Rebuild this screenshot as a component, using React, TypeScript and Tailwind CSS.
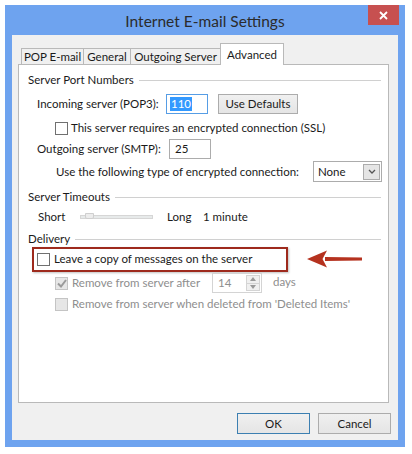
import React from "react"

const font = { fontFamily: "Lato, 'Noto Sans', sans-serif" }

function Check({ checked = false, disabled = false }: { checked?: boolean; disabled?: boolean }) {
  return (
    <div
      className={
        disabled
          ? "flex h-[13px] w-[13px] shrink-0 items-center justify-center border border-[#c4c4c4] bg-[#e6e6e6]"
          : "flex h-[13px] w-[13px] shrink-0 items-center justify-center border border-[#707070] bg-white"
      }
    >
      {checked && (
        <svg width="10" height="9" viewBox="0 0 10 9">
          <path d="M1 4.5 L4 7.5 L9 1" fill="none" stroke="#9a9a9a" strokeWidth="2" />
        </svg>
      )}
    </div>
  )
}

function GroupHeader({ title }: { title: string }) {
  return (
    <div className="flex h-4 items-center gap-[5px] pl-[9px] pr-[7px]">
      <span className="whitespace-nowrap">{title}</span>
      <div className="h-px flex-1 bg-[#d0d0d0]" />
    </div>
  )
}

export default function App() {
  return (
    <div className="h-[454px] w-[412px] bg-white p-[5px] text-[11.5px] leading-4 text-[#1a1a1a]" style={font}>
      {/* Window */}
      <div className="flex h-[442px] w-[400px] flex-col bg-[#6ea3ef]">
        {/* Title bar */}
        <div className="relative flex h-[30px] shrink-0 items-center justify-center">
          <span className="pt-[2px] text-[15.5px] text-[#2b2b2b]">Internet E-mail Settings</span>
          <div className="absolute right-[6px] top-0 flex h-[20px] w-[31px] items-center justify-center bg-[#c75050]">
            <svg width="9" height="9" viewBox="0 0 9 9">
              <path d="M1 1 L8 8 M8 1 L1 8" stroke="white" strokeWidth="1.8" />
            </svg>
          </div>
        </div>

        {/* Client area */}
        <div className="mx-[7px] mb-[7px] flex flex-1 flex-col bg-[#f0f0f0] pl-[6px] pr-[9px] pt-[8px]">
          {/* Tabs */}
          <div className="flex h-[21px] items-end pl-[3px]">
            <div className="flex h-[16px] w-[62px] items-center justify-center border-l border-t border-[#b9b9b9]">POP E-mail</div>
            <div className="flex h-[16px] w-[47px] items-center justify-center border-l border-t border-[#b9b9b9]">General</div>
            <div className="flex h-[16px] w-[90px] items-center justify-center border-l border-t border-[#b9b9b9]">Outgoing Server</div>
            <div className="relative z-10 -mb-px flex h-[22px] w-[64px] items-start justify-center border-x border-t border-[#b9b9b9] bg-white pt-[3px]">
              Advanced
            </div>
          </div>

          {/* Panel */}
          <div className="flex h-[339px] flex-col border border-[#b9b9b9] bg-white pt-[7px]">
            <GroupHeader title="Server Port Numbers" />

            <div className="mt-[6px] flex h-[20px] items-center pl-[18px]">
              <span className="w-[129px] whitespace-nowrap">Incoming server (POP3):</span>
              <div className="flex h-[20px] w-[42px] items-center border border-[#569de5] bg-white px-[3px]">
                <span className="bg-[#3399ff] px-px leading-[14px] text-white">110</span>
              </div>
              <div className="ml-[10px] flex h-[20px] w-[80px] items-center justify-center border border-[#acacac] bg-gradient-to-b from-[#f0f0f0] to-[#e5e5e5]">
                Use Defaults
              </div>
            </div>

            <div className="mt-[6px] flex h-4 items-center gap-[3px] pl-[36px]">
              <Check />
              <span className="whitespace-nowrap">This server requires an encrypted connection (SSL)</span>
            </div>

            <div className="mt-[3px] flex h-[20px] items-center pl-[18px]">
              <span className="w-[132px] whitespace-nowrap">Outgoing server (SMTP):</span>
              <div className="flex h-[20px] w-[42px] items-center border border-[#acacac] bg-white px-[5px]">25</div>
            </div>

            <div className="mt-[2px] flex h-[21px] items-center pl-[37px]">
              <span className="w-[257px] whitespace-nowrap">Use the following type of encrypted connection:</span>
              <div className="flex h-[21px] w-[69px] items-center justify-between border border-[#acacac] bg-white pl-[4px] pr-[1px]">
                <span>None</span>
                <div className="flex h-[16px] w-[17px] items-center justify-center border border-[#acacac] bg-[#e5e5e5]">
                  <svg width="8" height="5" viewBox="0 0 8 5">
                    <path d="M1 1 L4 4 L7 1" fill="none" stroke="#555" strokeWidth="1.3" />
                  </svg>
                </div>
              </div>
            </div>

            <div className="mt-[7px]">
              <GroupHeader title="Server Timeouts" />
            </div>

            <div className="mt-[4px] flex h-4 items-center pl-[19px]">
              <span className="w-[42px]">Short</span>
              <div className="relative h-[4px] w-[73px] border border-[#d6d6d6] bg-[#e7eaea]">
                <div className="absolute -top-[3px] left-[4px] h-[6px] w-[9px] rounded-b-[2px] border border-[#cfcfcf] bg-[#ececec]" />
              </div>
              <span className="ml-[14px] w-[36px]">Long</span>
              <span>1 minute</span>
            </div>

            <div className="mt-[6px]">
              <GroupHeader title="Delivery" />
            </div>

            <div className="flex h-[24px] items-center pl-[13px]">
              <div className="flex h-[25px] w-[256px] items-center gap-[4px] border-2 border-[#9e2a1d] pl-[3px] shadow-[1px_1px_2px_rgba(0,0,0,0.25)]">
                <Check />
                <span className="whitespace-nowrap">Leave a copy of messages on the server</span>
              </div>
              <svg className="ml-[19px]" width="56" height="20" viewBox="0 0 56 20">
                <path d="M18 8 L55 8.5 L55 11.5 L18 12 Z" fill="#b5321f" />
                <path d="M0 10 L20 1.5 L15.5 10 L20 18.5 Z" fill="#b5321f" />
              </svg>
            </div>

            <div className="mt-[2px] flex h-[20px] items-center pl-[36px]">
              <Check checked disabled />
              <span className="ml-[4px] w-[140px] whitespace-nowrap text-[#8e8e8e]">Remove from server after</span>
              <div className="flex h-[20px] w-[50px] items-center justify-between border border-[#d4d4d4] bg-white pl-[5px] pr-[1px] text-[#8e8e8e]">
                <span>14</span>
                <div className="flex h-[16px] w-[14px] flex-col border border-[#d4d4d4] bg-[#f0f0f0]">
                  <div className="flex flex-1 items-center justify-center border-b border-[#d4d4d4]">
                    <svg width="6" height="4" viewBox="0 0 6 4"><path d="M0 4 L3 0 L6 4 Z" fill="#9a9a9a" /></svg>
                  </div>
                  <div className="flex flex-1 items-center justify-center">
                    <svg width="6" height="4" viewBox="0 0 6 4"><path d="M0 0 L3 4 L6 0 Z" fill="#9a9a9a" /></svg>
                  </div>
                </div>
              </div>
              <span className="-mt-[3px] ml-[11px] text-[#8e8e8e]">days</span>
            </div>

            <div className="mt-[3px] flex h-4 items-center pl-[36px]">
              <Check disabled />
              <span className="ml-[4px] whitespace-nowrap text-[#8e8e8e]">Remove from server when deleted from 'Deleted Items'</span>
            </div>
          </div>

          {/* Buttons */}
          <div className="mt-[10px] flex justify-end gap-[8px]">
            <div className="flex h-[21px] w-[73px] items-center justify-center border border-[#3c7fb1] bg-gradient-to-b from-[#f0f0f0] to-[#e5e5e5]">
              OK
            </div>
            <div className="-mr-[2px] flex h-[21px] w-[73px] items-center justify-center border border-[#acacac] bg-gradient-to-b from-[#f0f0f0] to-[#e5e5e5]">
              Cancel
            </div>
          </div>
        </div>
      </div>
    </div>
  )
}
